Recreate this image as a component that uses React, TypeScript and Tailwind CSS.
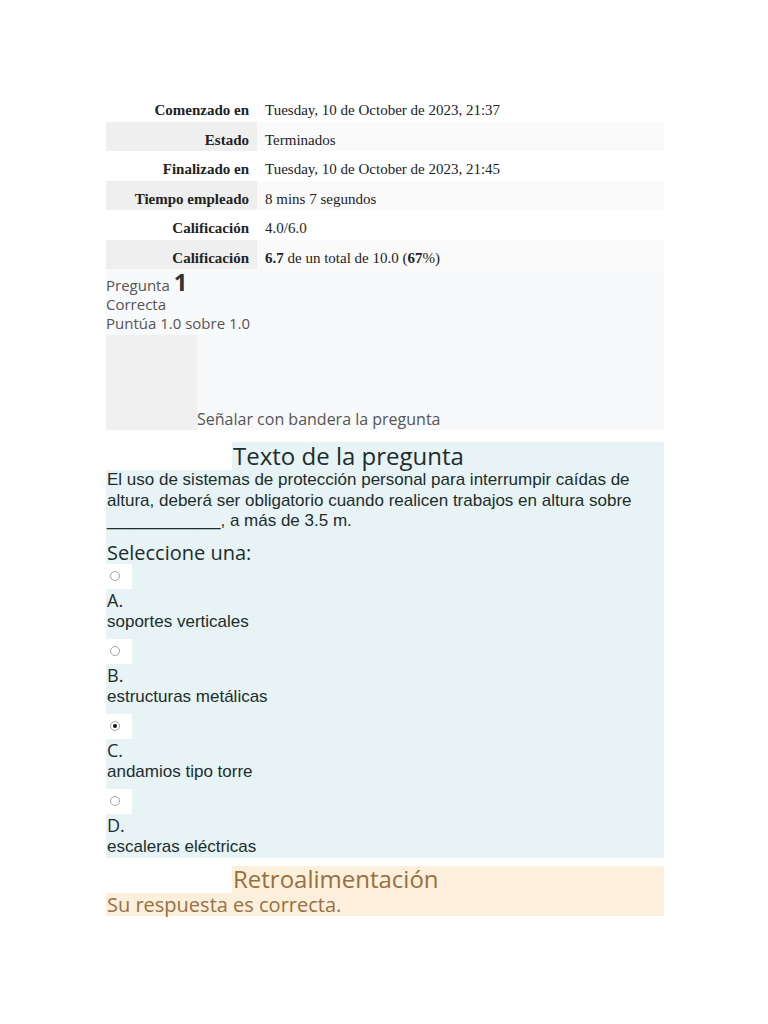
const summary = [
  { label: 'Comenzado en', value: <>Tuesday, 10 de October de 2023, 21:37</> },
  { label: 'Estado', value: <>Terminados</> },
  { label: 'Finalizado en', value: <>Tuesday, 10 de October de 2023, 21:45</> },
  { label: 'Tiempo empleado', value: <>8 mins 7 segundos</> },
  { label: 'Calificación', value: <>4.0/6.0</> },
  {
    label: 'Calificación',
    value: (
      <>
        <b>6.7</b> de un total de 10.0 (<b>67</b>%)
      </>
    ),
  },
]

const options = [
  { letter: 'A.', text: 'soportes verticales', checked: false },
  { letter: 'B.', text: 'estructuras metálicas', checked: false },
  { letter: 'C.', text: 'andamios tipo torre', checked: true },
  { letter: 'D.', text: 'escaleras eléctricas', checked: false },
]

const sans = "font-['Open_Sans',sans-serif]"
const body = "font-['Liberation_Sans',sans-serif] text-[17px]"

function Radio({ checked }: { checked: boolean }) {
  return (
    <div className="w-[26px] h-[25px] bg-white flex items-center pl-[4px]">
      <span className="w-[10px] h-[10px] rounded-full border border-[#a5a5a5] bg-white flex items-center justify-center">
        {checked && <span className="w-[4px] h-[4px] rounded-full bg-[#111]" />}
      </span>
    </div>
  )
}

export default function App() {
  return (
    <div className="min-h-[1024px] bg-white pt-[92px] pl-[106px] pr-[104px]">
      <table className="w-full border-collapse font-['Liberation_Serif',serif] text-[15px] text-[#222]">
        <tbody>
          {summary.map((row, i) => (
            <tr key={i} className={i % 2 === 1 ? 'bg-[#fafafa]' : ''}>
              <th
                className={`w-[151px] h-[29.5px] align-top pt-[9px] leading-[18px] text-right pr-[8px] font-bold whitespace-nowrap ${
                  i % 2 === 1 ? 'bg-[#efefef]' : ''
                }`}
              >
                {row.label}
              </th>
              <td className="align-top pt-[9px] leading-[18px] pl-[8px] text-left">{row.value}</td>
            </tr>
          ))}
        </tbody>
      </table>

      <div className={`bg-[#f8f9fa] ${sans} text-[15px] text-[#555]`}>
        <div className="leading-[19px] pt-[3px]">
          <div>
            Pregunta <span className="text-[24px] font-bold text-[#333] leading-[19px]">1</span>
          </div>
          <div>Correcta</div>
          <div>Puntúa 1.0 sobre 1.0</div>
        </div>
        <div className="flex items-end mt-[2px]">
          <div className="w-[91px] h-[95px] bg-[#f0f0f0]" />
          <div className="pb-[1px] text-[16px] leading-[20px]">Señalar con bandera la pregunta</div>
        </div>
      </div>

      <div className="mt-[12px]">
        <div className="ml-[126px] bg-[#e7f3f5] h-[28px] flex items-center pl-[1px]">
          <span className={`${sans} text-[24px] text-[#1d2d2d]`}>Texto de la pregunta</span>
        </div>
        <div className="bg-[#e7f3f5] pb-[1px] text-[#1d2d2d]">
          <p className={`${body} leading-[20.5px] pl-[1px] pr-[20px]`}>
            El uso de sistemas de protección personal para interrumpir caídas de altura, deberá ser
            obligatorio cuando realicen trabajos en altura sobre ____________, a más de 3.5 m.
          </p>
          <div className={`${sans} text-[20px] mt-[10px] leading-[22px] pl-[1px]`}>Seleccione una:</div>
          <div className="flex flex-col gap-[7px]">
            {options.map(o => (
              <div key={o.letter}>
                <Radio checked={o.checked} />
                <div className={`${sans} text-[18px] leading-[22px] pl-[1px]`}>{o.letter}</div>
                <div className={`${body} leading-[21px] pl-[1px]`}>{o.text}</div>
              </div>
            ))}
          </div>
        </div>
      </div>

      <div className={`mt-[8px] ${sans} text-[#97703f]`}>
        <div className="ml-[126px] bg-[#fcefdc] h-[27px] flex items-center pl-[1px]">
          <span className="text-[24px]">Retroalimentación</span>
        </div>
        <div className="bg-[#fcefdc] text-[20px] leading-[23px] pl-[1px]">Su respuesta es correcta.</div>
      </div>
    </div>
  )
}
